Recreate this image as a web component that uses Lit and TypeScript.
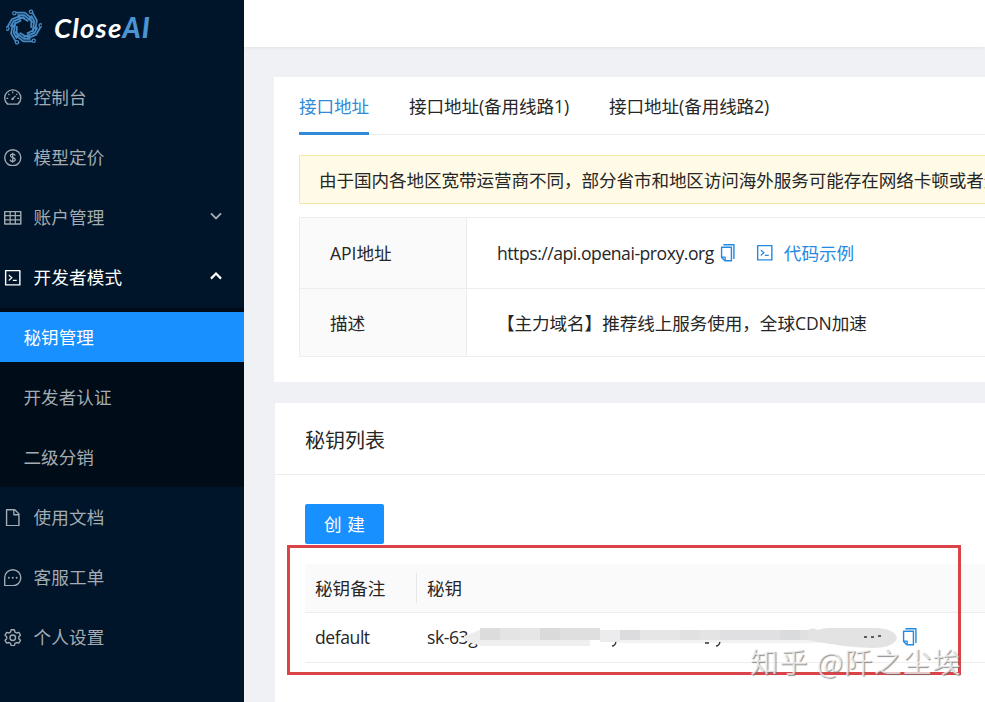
import { LitElement, html, css, svg } from "lit";
import { customElement } from "lit/decorators.js";
import { classMap } from "lit/directives/class-map.js";

const stroke = (body: unknown) => svg`<g fill="none" stroke="currentColor" stroke-width="70">${body}</g>`;

const ICONS: Record<string, unknown> = {
  dashboard: stroke(svg`<path d="M250 838A412 412 0 1 1 774 838Z" stroke-linejoin="round"/><path d="M500 570L655 415M512 190v90M190 540h90M744 540h90M285 313l60 60M739 313l-50 50" stroke-width="62"/><circle cx="500" cy="570" r="25"/>`),
  dollar: stroke(svg`<circle cx="512" cy="512" r="412"/><path d="M632 410c-5-60-55-87-120-87-70 0-118 33-118 87 0 120 246 70 246 196 0 60-54 93-128 93-72 0-125-33-130-93M512 260v504" stroke-width="62"/>`),
  table: svg`<path d="M928 160H96c-17.700 0-32 14.300-32 32v640c0 17.700 14.300 32 32 32h832c17.700 0 32-14.300 32-32V192c0-17.700-14.300-32-32-32zm-40 208H676V232h212v136zm0 224H676V432h212v160zM412 432h200v160H412V432zm200-64H412V232h200v136zm-476 64h212v160H136V432zm0-200h212v136H136V232zm0 424h212v136H136V656zm276 0h200v136H412V656zm476 136H676V656h212v136z"/>`,
  code: svg`<path d="M516 673c0 4.400 3.400 8 7.500 8h185c4.100 0 7.500-3.600 7.500-8v-48c0-4.400-3.400-8-7.500-8h-185c-4.100 0-7.500 3.600-7.500 8v48zm-194.900 6.100l192-161c3.800-3.200 3.800-9.100 0-12.300l-192-160.900A7.950 7.950 0 0 0 308 351v62.700c0 2.400 1 4.600 2.900 6.100L420.700 512l-109.800 92.200a8.100 8.100 0 0 0-2.900 6.100V673c0 6.800 7.900 10.500 13.100 6.100zM880 112H144c-17.700 0-32 14.300-32 32v736c0 17.700 14.300 32 32 32h736c17.700 0 32-14.300 32-32V144c0-17.700-14.300-32-32-32zm-40 728H184V184h656v656z"/>`,
  copy: svg`<path d="M832 64H296c-4.400 0-8 3.600-8 8v56c0 4.400 3.600 8 8 8h496v688c0 4.400 3.600 8 8 8h56c4.400 0 8-3.600 8-8V96c0-17.700-14.300-32-32-32zM704 192H192c-17.700 0-32 14.300-32 32v530.700c0 8.500 3.400 16.600 9.400 22.600l173.300 173.300c2.200 2.200 4.700 4 7.400 5.500v1.900h4.200c3.500 1.300 7.200 2 11 2H704c17.700 0 32-14.300 32-32V224c0-17.700-14.300-32-32-32zM350 856.200L263.900 770H350v86.200zM664 888H414V746c0-22.100-17.900-40-40-40H232V264h432v624z"/>`,
  file: svg`<path d="M854.600 288.600L639.400 73.400c-6-6-14.100-9.400-22.600-9.400H192c-17.700 0-32 14.300-32 32v832c0 17.700 14.300 32 32 32h640c17.700 0 32-14.300 32-32V311.300c0-8.500-3.400-16.700-9.400-22.700zM790.200 326H602V137.800L790.200 326zm1.800 562H232V136h302v216a42 42 0 0 0 42 42h216v494z"/>`,
  message: svg`${stroke(svg`<path d="M100 924V512A412 412 0 1 1 512 924Z" stroke-linejoin="round"/>`)}<circle cx="312" cy="512" r="50"/><circle cx="512" cy="512" r="50"/><circle cx="712" cy="512" r="50"/>`,
  setting: stroke(svg`<path stroke-linejoin="round" d="M430 105H594L624 220L710 270L824 238L906 380L824 462V562L906 644L824 786L710 754L624 804L594 919H430L400 804L314 754L200 786L118 644L200 562V462L118 380L200 238L314 270L400 220Z"/><circle cx="512" cy="512" r="142"/>`),
  down: stroke(svg`<path d="M190 340L512 665L834 340" stroke-width="120"/>`),
  up: stroke(svg`<path d="M190 680L512 355L834 680" stroke-width="140"/>`),
};

const icon = (name: string, cls = "icon") =>
  html`<svg class=${cls} viewBox="64 64 896 896" fill="currentColor">${ICONS[name]}</svg>`;

interface Item { icon: string; label: string; arrow?: string; open?: boolean; children?: string[] }

const MENU: Item[] = [
  { icon: "dashboard", label: "控制台" },
  { icon: "dollar", label: "模型定价" },
  { icon: "table", label: "账户管理", arrow: "down" },
  { icon: "code", label: "开发者模式", arrow: "up", open: true, children: ["秘钥管理", "开发者认证", "二级分销"] },
  { icon: "file", label: "使用文档" },
  { icon: "message", label: "客服工单" },
  { icon: "setting", label: "个人设置" },
];

// x, y, width, height, fill of each block covering the secret
const MASK: [number, number, number, number, string][] = [
  [53, 2, 20, 12, "#dcdcdc"], [73, 2, 20, 12, "#e4e4e4"], [93, 2, 20, 12, "#e6e6e6"],
  [113, 2, 20, 12, "#dadada"], [133, 2, 40, 12, "#dfdfdf"], [53, 14, 110, 6, "#efefef"],
  [173, 4, 20, 12, "#ececee"], [193, 4, 20, 10, "#dcdcde"], [213, 4, 40, 10, "#e6e6e6"],
  [253, 4, 20, 10, "#e1e1e1"], [273, 4, 20, 10, "#e4e4e4"], [293, 4, 60, 10, "#e0e0e2"],
  [353, 4, 20, 10, "#dadbdd"], [373, 4, 30, 10, "#e0e0e0"], [193, 14, 200, 3, "#f2f2f2"],
];

@customElement("app-root")
export class AppRoot extends LitElement {
  static styles = css`
    :host { display: flex; width: 985px; height: 702px; overflow: hidden; position: relative; background: #f0f1f5;
      font: 17.6px/26px "Open Sans", "Noto Sans CJK SC", sans-serif; color: #262626; white-space: nowrap; }
    * { box-sizing: border-box; }
    svg { display: block; flex: none; }
    .side { width: 244px; flex: none; background: #001529; color: #a3abb3; letter-spacing: .15px; }
    .brand { height: 67px; display: flex; padding: 9px 0 0 6px; gap: 12px; }
    .name { font: italic 700 27.5px/37px Lato, sans-serif; letter-spacing: 1.2px; color: #fff; }
    .name b { color: #4b93d2; }
    .item { height: 60px; display: flex; align-items: center; padding: 0 20px 0 4px; }
    .item span { flex: 1; margin-left: 12px; }
    .item.open, .sub.on { color: #fff; }
    .icon { width: 17.5px; height: 17.5px; }
    .item .icon { margin-top: 1px; }
    .arrow { width: 14px; height: 14px; margin: -3px 1px 0 0; }
    .subs { background: #000c17; height: 179px; margin: 1px 0 0; padding-top: 4px; letter-spacing: 0; }
    .sub { height: 50px; margin-bottom: 10px; display: flex; align-items: center; padding-left: 23.5px; }
    .sub.on { background: #1890ff; }
    .main { flex: 1; min-width: 0; }
    .top { height: 47px; background: #fff; box-shadow: 0 1px 3px rgba(0, 21, 41, .06); }
    .card { background: #fff; margin: 30px 0 0 30px; height: 305px; padding-left: 25px; overflow: hidden; }
    .tabs { height: 58px; display: flex; gap: 40px; border-bottom: 1px solid #ededed; }
    .tab { height: 58px; padding-top: 16px; letter-spacing: -.1px; }
    .tab.on { color: #318ad8; border-bottom: 3px solid #318ad8; }
    .alert { margin-top: 20px; height: 49px; border: 1px solid #f3e5a6; border-right: 0; border-radius: 2px 0 0 2px; background: #fffbe6; padding: 11px 0 0 19px; overflow: hidden; letter-spacing: -.1px; }
    .desc { margin-top: 13px; display: grid; grid-template-columns: 167px 1fr; grid-template-rows: 71px 68px; border: 1px solid #ededed; border-right: 0; height: 140px; }
    .desc > div { display: flex; align-items: center; padding-left: 30px; border-bottom: 1px solid #ededed; letter-spacing: -.07px; }
    .desc > .th { background: #fafafa; border-right: 1px solid #ededed; }
    .desc > div > .url { letter-spacing: -.47px; }
    .blue { color: #2489e0; }
    .c1 { margin-left: 5px; }
    .c2 { margin: 0 10px 0 20px; }
    .list { margin: 21px 0 0 31px; height: 299px; padding: 0; }
    .head { height: 72px; border-bottom: 1px solid #ededed; padding: 25px 0 0 30px; font-size: 20px; }
    .body { padding: 29px 0 0 30px; }
    .btn { width: 79px; height: 40px; border: 0; border-radius: 2px; background: #1890ff; color: #fff; font: inherit; padding: 0; display: block; word-spacing: 1px; }
    .row { display: flex; align-items: center; height: 50px; border-bottom: 1px solid #ededed; padding-left: 10px; }
    .row.h { margin-top: 20px; height: 49px; background: #fafafa; }
    .k { width: 102px; height: 30px; line-height: 30px; }
    .h .k { border-right: 1px solid #e8e8e8; }
    .v { padding-left: 10px; position: relative; width: 484px; }
    .row:not(.h) { letter-spacing: -.45px; padding-bottom: 1px; }
    .mask { position: absolute; left: 10px; top: 2px; }
    .frame { position: absolute; left: 287px; top: 545px; width: 674px; height: 130px; border: 3px solid #da4449; }
    .mark { position: absolute; left: 750px; top: 642px; font: 28px/38px "Noto Sans CJK SC", sans-serif; letter-spacing: 1.4px; color: rgba(255, 255, 255, .7); text-shadow: 1px 1px 1px rgba(110, 110, 110, .75); }
  `;

  logo() {
    return html`<svg width="36" height="36" viewBox="-50 -50 100 100" fill="none" stroke="#4689c4" stroke-width="5">
      ${[0, 60, 120, 180, 240, 300].map((a) => svg`<g transform="rotate(${a})">
        <path d="M-23-40H2L22-24M-18-33H0L25-13M-16-26H-4L12-16"/><circle cx="-27" cy="-38" r="4.500" stroke-width="3.500"/></g>`)}
    </svg>`;
  }

  render() {
    return html`
      <nav class="side">
        <div class="brand">${this.logo()}<div class="name">Close<b>AI</b></div></div>
        ${MENU.map((m) => html`
          <div class=${classMap({ item: true, open: !!m.open })}>${icon(m.icon)}<span>${m.label}</span>${m.arrow ? icon(m.arrow, "arrow") : ""}</div>
          ${m.children ? html`<div class="subs">${m.children.map((c, i) => html`<div class=${classMap({ sub: true, on: i === 0 })}>${c}</div>`)}</div>` : ""}`)}
      </nav>
      <main class="main">
        <div class="top"></div>
        <section class="card">
          <div class="tabs"><div class="tab on">接口地址</div><div class="tab">接口地址(备用线路1)</div><div class="tab">接口地址(备用线路2)</div></div>
          <div class="alert">由于国内各地区宽带运营商不同，部分省市和地区访问海外服务可能存在网络卡顿或者无</div>
          <div class="desc">
            <div class="th">API地址</div>
            <div><span class="url">https://api.openai-proxy.org</span>${icon("copy", "icon blue c1")}${icon("code", "icon blue c2")}<span class="blue">代码示例</span></div>
            <div class="th">描述</div>
            <div>【主力域名】推荐线上服务使用，全球CDN加速</div>
          </div>
        </section>
        <section class="card list">
          <div class="head">秘钥列表</div>
          <div class="body">
            <button class="btn">创 建</button>
            <div class="row h"><div class="k">秘钥备注</div><div class="v">秘钥</div></div>
            <div class="row"><div class="k">default</div>
              <div class="v">sk-63g
                <svg class="mask" width="473" height="26">
                  <path d="M37 10L53 4V19L46 18L37 14Z" fill="#ededed"/>
                  ${MASK.map(([x, y, w, h, f]) => svg`<rect x=${x} y=${y} width=${w} height=${h} fill=${f} />`)}
                  <path d="M381 4Q385 1 391 4Q395 2 403 2H450Q468 3 470 12Q467 22 445 22Q415 21 381 14Z" fill="#e3e3e3"/>
                  <path d="M185 20q3 0 4-4M278 17h4M289 20q3 0 4-4M437 11h3m4 0h3m4-1h3" fill="none" stroke="#333" stroke-width="1.300"/>
                </svg>
              </div>${icon("copy", "icon blue")}</div>
          </div>
        </section>
      </main>
      <div class="frame"></div>
      <div class="mark">知乎 @阡之尘埃</div>
    `;
  }
}
